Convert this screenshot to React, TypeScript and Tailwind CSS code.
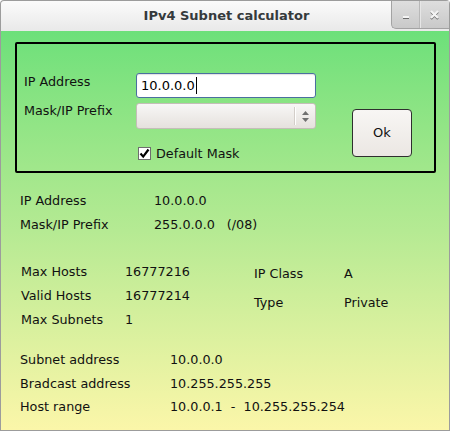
import React from 'react'

const font = { fontFamily: '"DejaVu Sans", "Liberation Sans", sans-serif' }

function TitleBar() {
  return (
    <div className="relative flex h-[31px] shrink-0 items-center justify-center rounded-t-[4px] border-x border-t border-[#9c9c9c] bg-gradient-to-b from-[#fbfbfb] to-[#e9e9e9]">
      <span className="pl-[3px] text-[13px] font-bold text-[#353a3c]">IPv4 Subnet calculator</span>
      {/* window buttons */}
      <div className="absolute right-0 top-0 flex h-[28px] overflow-hidden rounded-bl-[5px] border-b border-l border-[#a3a3a3] bg-gradient-to-b from-[#dedede] to-[#c9c9c9]">
        <div className="flex w-[28px] items-center justify-center border-r border-[#b8b8b8]">
          <svg width="10" height="10" viewBox="0 0 10 10">
            <rect x="2" y="7" width="6" height="2" fill="#6b6b6b" />
            <rect x="2" y="6" width="6" height="2" fill="#f4f4f4" />
          </svg>
        </div>
        <div className="flex w-[29px] items-center justify-center border-l border-[#e6e6e6]">
          <svg width="12" height="12" viewBox="0 0 12 12">
            <path d="M2 3 L9 10 M9 3 L2 10" stroke="#707070" strokeWidth="2.2" />
            <path d="M2 2 L9 9 M9 2 L2 9" stroke="#f4f4f4" strokeWidth="2.2" />
          </svg>
        </div>
      </div>
    </div>
  )
}

function InputBox() {
  return (
    <div className="flex h-[25px] w-[180px] items-center rounded-[3px] border border-[#4a6f9f] bg-white pl-[4px] shadow-[inset_0_1px_1px_rgba(0,0,0,0.12)]">
      <span className="text-[13px] leading-none text-black">10.0.0.0</span>
      <span className="ml-[1px] h-[17px] w-px bg-black" />
    </div>
  )
}

function ComboBox() {
  return (
    <div className="flex h-[26px] w-[180px] items-center rounded-[3px] border border-[#c4beb8] bg-gradient-to-b from-[#f8f7f6] to-[#e5e1dd]">
      <div className="flex-1" />
      <div className="h-[18px] w-px bg-[#d3cec9] shadow-[1px_0_0_#ffffff]" />
      <div className="flex w-[20px] justify-center">
        <svg width="9" height="13" viewBox="0 0 9 13">
          <path d="M4.5 1 L8 5 L1 5 Z" fill="#707070" />
          <path d="M4.5 12 L8 8 L1 8 Z" fill="#707070" />
        </svg>
      </div>
    </div>
  )
}

function CheckBox() {
  return (
    <div className="flex h-[13px] w-[13px] items-center justify-center border border-[#6e6e6e] bg-white">
      <svg width="11" height="11" viewBox="0 0 11 11">
        <path d="M1.5 5.5 L4.2 8.6 L9.5 1.5" fill="none" stroke="#000" strokeWidth="2.2" />
      </svg>
    </div>
  )
}

function Row({ label, value, w, extra }: { label: string; value: string; w: string; extra?: string }) {
  return (
    <div className="flex h-[24px] items-center">
      <span className={w}>{label}</span>
      <span>{value}</span>
      {extra && <span className="ml-[12px]">{extra}</span>}
    </div>
  )
}

export default function App() {
  return (
    <div className="flex h-[431px] w-[450px] flex-col text-[12.75px] text-[#111]" style={font}>
      <TitleBar />
      <div className="flex flex-1 flex-col border-x border-b border-[#9c9c9c] bg-gradient-to-b from-[#6ce07a] via-[#b5ea93] to-[#fbf6a9]">
        {/* input panel */}
        <div className="ml-[14px] mt-[11px] flex h-[131px] w-[421px] rounded-[2px] border-2 border-black">
          <div className="flex flex-col pl-[7px] pt-[29px]">
            <div className="flex items-start">
              <span className="w-[112px] pt-[1px] leading-[15px]">IP Address</span>
              <InputBox />
            </div>
            <div className="mt-[5px] flex items-start">
              <span className="w-[112px] leading-[15px]">Mask/IP Prefix</span>
              <ComboBox />
            </div>
            <div className="ml-[114px] mt-[17px] flex items-center gap-[5px]">
              <CheckBox />
              <span className="leading-[15px]">Default Mask</span>
            </div>
          </div>
          <button className="ml-[36px] mt-[65px] flex h-[48px] w-[60px] items-center justify-center rounded-[4px] border border-[#2f2f2f] bg-gradient-to-b from-[#f8f6f4] to-[#ebe7e3] text-[13px]">
            Ok
          </button>
        </div>

        {/* address / mask */}
        <div className="ml-[19px] mt-[16px] flex flex-col">
          <Row label="IP Address" value="10.0.0.0" w="w-[134px]" />
          <Row label="Mask/IP Prefix" value="255.0.0.0" w="w-[134px]" extra="(/08)" />
        </div>

        {/* hosts / class */}
        <div className="ml-[20px] mt-[23px] flex">
          <div className="flex w-[233px] flex-col">
            <Row label="Max Hosts" value="16777216" w="w-[104px]" />
            <Row label="Valid Hosts" value="16777214" w="w-[104px]" />
            <Row label="Max Subnets" value="1" w="w-[104px]" />
          </div>
          <div className="mt-[2px] flex flex-col gap-[5px]">
            <Row label="IP Class" value="A" w="w-[90px]" />
            <Row label="Type" value="Private" w="w-[90px]" />
          </div>
        </div>

        {/* subnet range */}
        <div className="ml-[19px] mt-[16px] flex flex-col">
          <div className="flex h-[23.5px] items-center">
            <span className="w-[150px]">Subnet address</span>
            <span>10.0.0.0</span>
          </div>
          <div className="flex h-[23.5px] items-center">
            <span className="w-[150px]">Bradcast address</span>
            <span>10.255.255.255</span>
          </div>
          <div className="flex h-[23.5px] items-center">
            <span className="w-[150px]">Host range</span>
            <span className="whitespace-pre">10.0.0.1  -  10.255.255.254</span>
          </div>
        </div>
      </div>
    </div>
  )
}
